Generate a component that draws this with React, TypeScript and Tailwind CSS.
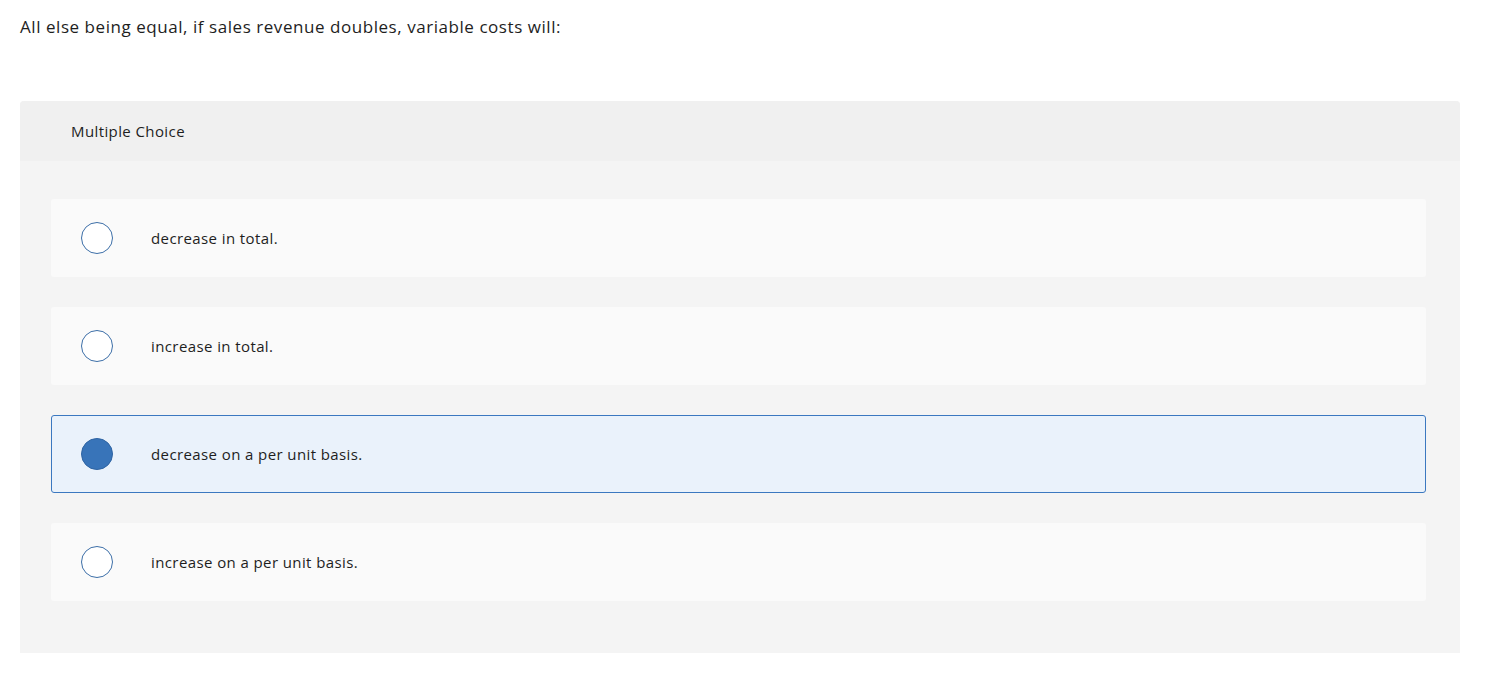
const options = [
  "decrease in total.",
  "increase in total.",
  "decrease on a per unit basis.",
  "increase on a per unit basis.",
];

const selected = 2;

export default function App() {
  return (
    <div className="min-h-[675px] bg-white text-[#1e1e1e] font-['Open_Sans',sans-serif]">
      <div className="px-5 pt-[15px]">
        <p className="text-[17px] leading-6 tracking-[0.55px]">
          All else being equal, if sales revenue doubles, variable costs will:
        </p>
      </div>

      <div className="mx-5 mt-[62px] w-[1440px] rounded-t-[4px] bg-[#f4f4f4]">
        <div className="flex h-[60px] items-center rounded-t-[4px] bg-[#f0f0f0] px-[51px]">
          <span className="text-[15px] tracking-[0.4px]">Multiple Choice</span>
        </div>

        <div className="flex flex-col gap-[30px] pl-[31px] pr-[34px] pt-[38px] pb-[52px]">
          {options.map((label, i) => {
            const isSel = i === selected;
            return (
              <div
                key={i}
                className={
                  isSel
                    ? "flex h-[78px] items-center rounded-[3px] border border-[#3b78c0] bg-[#eaf2fb] pl-[29px]"
                    : "flex h-[78px] items-center rounded-[3px] bg-[#fafafa] pl-[30px]"
                }
              >
                <span
                  className={
                    isSel
                      ? "h-8 w-8 shrink-0 rounded-full border border-[#2f64a3] bg-[#3874b9]"
                      : "h-8 w-8 shrink-0 rounded-full border border-[#3d6fa8] bg-white"
                  }
                />
                <span className="ml-[38px] text-[15px] tracking-[0.4px]">{label}</span>
              </div>
            );
          })}
        </div>
      </div>
    </div>
  );
}
